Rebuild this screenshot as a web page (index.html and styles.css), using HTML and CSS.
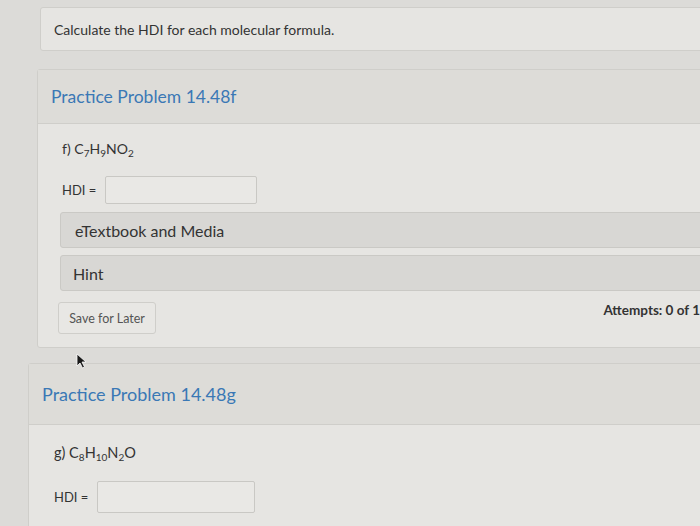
FILE: index.html
```html
<!DOCTYPE html>
<html lang="en">
<head>
    <meta charset="UTF-8">
    <title>Practice Problems</title>
    <link rel="stylesheet" href="styles.css">
</head>
<body>
    <div class="page">
        <div class="card intro">
            <p>Calculate the HDI for each molecular formula.</p>
        </div>

        <div class="card problem first">
            <div class="problem-head">Practice Problem 14.48f</div>
            <div class="problem-body">
                <div class="formula">f) C<sub>7</sub>H<sub>9</sub>NO<sub>2</sub></div>
                <div class="answer-row">
                    <label>HDI =</label>
                    <input type="text" class="answer">
                </div>
                <div class="bar">eTextbook and Media</div>
                <div class="bar">Hint</div>
                <div class="actions">
                    <button type="button">Save for Later</button>
                    <span class="attempts">Attempts: 0 of 1</span>
                </div>
            </div>
        </div>

        <div class="cursor">
            <svg width="12" height="16" viewBox="0 0 12 16"><path d="M1 1 L1 13 L4 10 L6.5 15 L8.5 14 L6 9 L10 9 Z" fill="#1a1a1a" stroke="#fff" stroke-width="0.8"/></svg>
        </div>

        <div class="card problem second">
            <div class="problem-head">Practice Problem 14.48g</div>
            <div class="problem-body">
                <div class="formula">g) C<sub>8</sub>H<sub>10</sub>N<sub>2</sub>O</div>
                <div class="answer-row">
                    <label>HDI =</label>
                    <input type="text" class="answer">
                </div>
            </div>
        </div>
    </div>
</body>
</html>
```

FILE: styles.css
```css
body {
    margin: 0;
    background: #dcdbd8;
    font-family: Lato, "Open Sans", sans-serif;
    color: #333;
    overflow: hidden;
}
.page {
    padding-top: 7px;
    width: 760px;
}
.card {
    background: #e6e5e2;
    border: 1px solid #cfceca;
    border-radius: 3px;
}
.intro {
    margin-left: 40px;
    height: 42px;
    display: flex;
    align-items: center;
    padding-left: 13px;
}
.intro p {
    margin: 0;
    font-size: 14px;
}
.problem-head {
    background: #dddcd8;
    border-bottom: 1px solid #cfceca;
    color: #3a78b5;
    font-size: 17.5px;
    display: flex;
    align-items: center;
}
.first {
    margin: 18px 0 0 37px;
    width: 700px;
}
.first .problem-head {
    height: 53px;
    padding-left: 13px;
}
.first .problem-body {
    padding: 17px 0 13px 24px;
}
.formula {
    font-size: 14px;
    line-height: 16px;
}
sub {
    font-size: 10px;
    vertical-align: -3px;
    line-height: 0;
}
.answer-row {
    display: flex;
    align-items: center;
    margin-top: 19px;
    font-size: 13px;
}
.answer-row label {
    width: 43px;
}
.answer {
    width: 150px;
    height: 26px;
    padding: 0;
    border: 1px solid #c9c8c4;
    background: #e9e8e5;
    border-radius: 2px;
}
.bar {
    margin: 8px 0 0 -2px;
    height: 34px;
    background: #d8d7d4;
    border: 1px solid #cac9c5;
    border-radius: 3px;
    padding-left: 14px;
    display: flex;
    align-items: center;
    font-size: 16px;
}
.bar + .bar {
    margin-top: 7px;
    padding-left: 12px;
}
.actions {
    margin: 11px 38px 0 -4px;
    display: flex;
    justify-content: space-between;
    align-items: flex-start;
}
button {
    width: 98px;
    height: 32px;
    background: #e8e7e4;
    border: 1px solid #cfceca;
    border-radius: 3px;
    font-family: Lato, "Open Sans", sans-serif;
    font-size: 12.5px;
    color: #555;
    padding: 0;
}
.attempts {
    font-weight: bold;
    font-size: 13.5px;
    margin-top: 0;
}
.cursor {
    height: 15px;
    padding: 5px 0 0 76px;
    margin-bottom: -5px;
    line-height: 0;
}
.second {
    margin-left: 28px;
    width: 700px;
}
.second .problem-head {
    height: 60px;
    padding-left: 13px;
    font-size: 18px;
}
.second .problem-body {
    padding: 20px 0 20px 25px;
}
.second .formula {
    font-size: 14.5px;
}
.second .answer-row {
    margin-top: 20px;
}
.second .answer {
    width: 156px;
    height: 30px;
}
```
